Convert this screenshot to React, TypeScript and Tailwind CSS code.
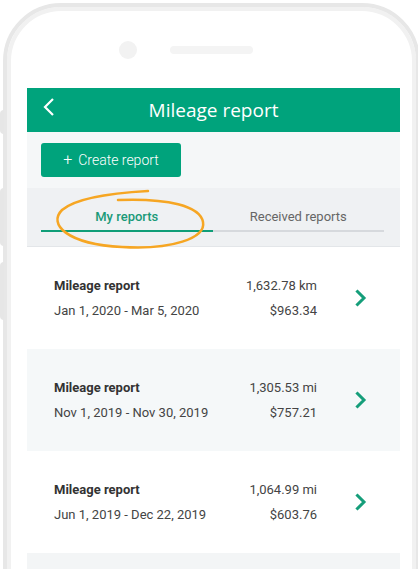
import React from 'react';

const reports = [
  { title: 'Mileage report', range: 'Jan 1, 2020 - Mar 5, 2020', distance: '1,632.78 km', amount: '$963.34', tint: false },
  { title: 'Mileage report', range: 'Nov 1, 2019 - Nov 30, 2019', distance: '1,305.53 mi', amount: '$757.21', tint: true },
  { title: 'Mileage report', range: 'Jun 1, 2019 - Dec 22, 2019', distance: '1,064.99 mi', amount: '$603.76', tint: false },
];

const ReportRow = ({ r }: { r: (typeof reports)[number] }) => (
  <div className={`flex h-[102px] items-center pl-[27px] pr-[33px] ${r.tint ? 'bg-[#f5f8f9]' : 'bg-white'}`}>
    <div className="flex flex-1 flex-col gap-[9px]">
      <span className="text-[13px] font-bold leading-[16px] text-[#333]">{r.title}</span>
      <span className="text-[13px] leading-[16px] text-[#444]">{r.range}</span>
    </div>
    <div className="flex flex-col items-end gap-[9px]">
      <span className="text-[13px] leading-[16px] text-[#444]">{r.distance}</span>
      <span className="text-[13px] leading-[16px] text-[#444]">{r.amount}</span>
    </div>
    <svg className="ml-[38px]" width="12" height="18" viewBox="0 0 12 18" fill="none">
      <path d="M2.5 2.5 L9 9 L2.5 15.5" stroke="#159e7a" strokeWidth="3" strokeLinecap="square" />
    </svg>
  </div>
);

export default function App() {
  return (
    <div className="relative h-[569px] w-[418px] overflow-hidden bg-white" style={{ fontFamily: 'Roboto, "Liberation Sans", sans-serif' }}>
      {/* side buttons */}
      <div className="absolute left-0 top-[110px] h-[24px] w-[4px] rounded-l-sm bg-[#e6e6e6]" />
      <div className="absolute left-0 top-[188px] h-[58px] w-[4px] rounded-l-sm bg-[#e6e6e6]" />
      <div className="absolute left-0 top-[262px] h-[58px] w-[4px] rounded-l-sm bg-[#e6e6e6]" />

      {/* phone */}
      <div className="ml-[3px] mt-[3px] h-[700px] w-[417px] shrink-0 rounded-[58px] border-4 border-[#e7e7e7] bg-white shadow-[inset_0_0_0_4px_#f1f1f1]">
        <div className="flex h-[77px] items-center pl-[112px] pt-[9px]">
          <div className="h-[18px] w-[18px] rounded-full bg-[#f2f2f2]" />
          <div className="ml-[33px] h-[8px] w-[83px] rounded-full bg-[#f4f4f4]" />
        </div>

        <div className="ml-[20px] mr-[16px] pt-[4px]">
          {/* header */}
          <div className="relative flex h-[44px] items-center justify-center bg-[#00a37c]">
            <svg className="absolute left-[15px] top-[9px]" width="14" height="22" viewBox="0 0 14 22" fill="none">
              <path d="M11 2 L3 10 L11 18" stroke="white" strokeWidth="2.2" />
            </svg>
            <span className="text-[19px] text-white" style={{ fontFamily: '"Open Sans", sans-serif' }}>Mileage report</span>
          </div>

          {/* actions */}
          <div className="h-[56px] bg-[#f5f7f8] pl-[14px] pt-[11px]">
            <button className="flex h-[34px] w-[140px] items-center justify-center gap-[6px] rounded-[3px] bg-[#00a37c] text-[14px] font-light text-white">
              <span className="text-[16px]">+</span>
              <span>Create report</span>
            </button>
          </div>

          {/* tabs */}
          <div className="h-[59px] border-b border-[#e3e6e9] bg-[#eff1f3] pl-[14px] pr-[16px] pt-[17px]">
            <div className="flex">
              <div className="flex h-[27px] flex-1 items-start justify-center border-b-2 border-[#0f9e78] pt-[2px] text-[13px] font-medium text-[#1a9a78]">My reports</div>
              <div className="flex h-[27px] flex-1 items-start justify-center border-b-2 border-[#d6d9dd] pt-[2px] text-[13px] text-[#666]">Received reports</div>
            </div>
          </div>

          {reports.map((r, i) => (
            <ReportRow key={i} r={r} />
          ))}
          <div className="h-[40px] bg-[#f3f5f6]" />
        </div>
      </div>

      {/* annotation */}
      <svg className="pointer-events-none absolute inset-0" width="418" height="569" viewBox="0 0 418 569" fill="none">
        <path
          d="M148 191 C112 193 76 198 62 210 C48 224 66 244 122 247 C172 250 206 238 203 222 C200 206 168 198 118 200"
          stroke="#f6a623"
          strokeWidth="2.5"
          strokeLinecap="round"
        />
      </svg>
    </div>
  );
}
